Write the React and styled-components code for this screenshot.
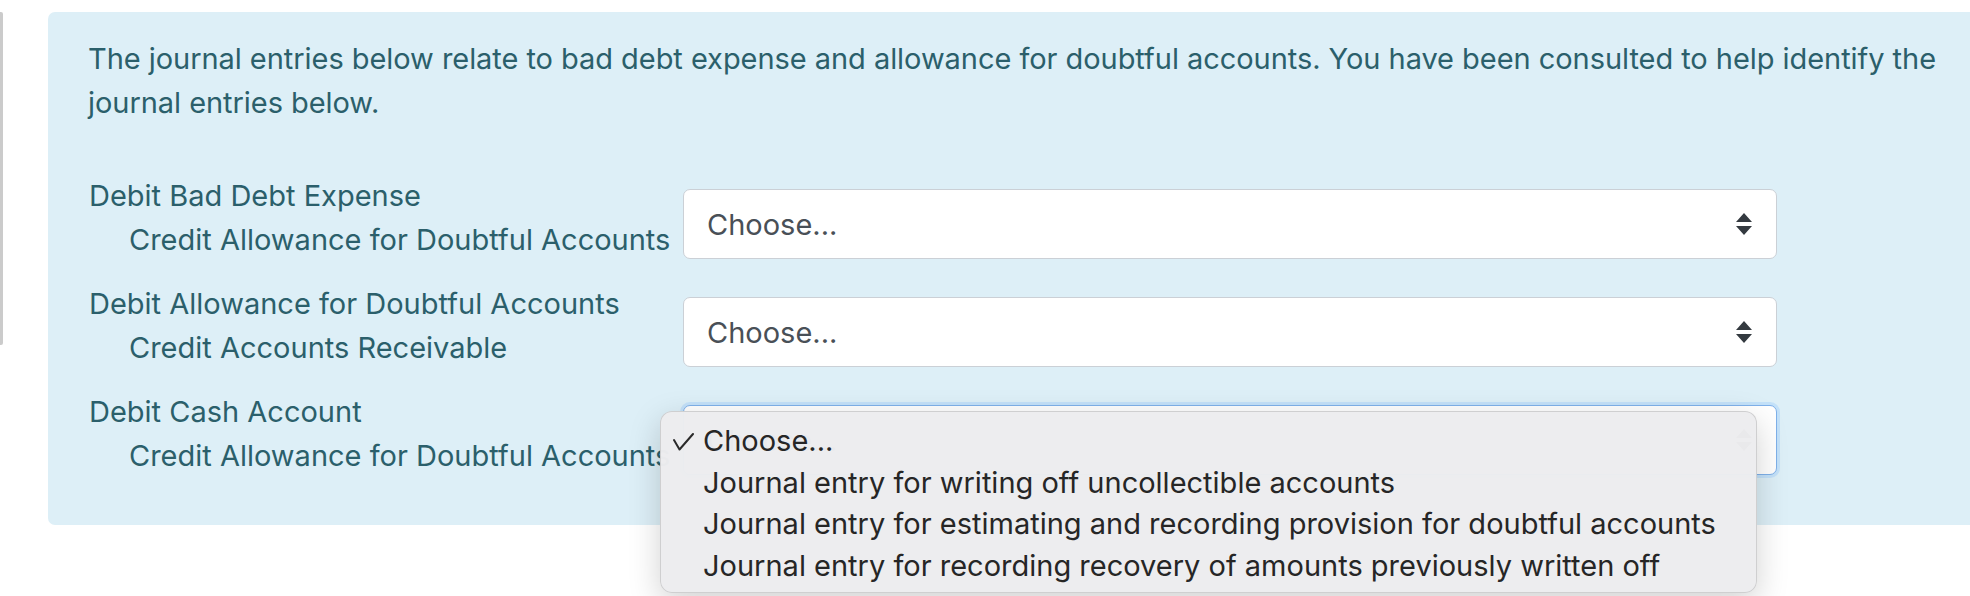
import React from 'react';
import styled, { createGlobalStyle, css } from 'styled-components';

const entries = [
    { debit: 'Debit Bad Debt Expense', credit: 'Credit Allowance for Doubtful Accounts' },
    { debit: 'Debit Allowance for Doubtful Accounts', credit: 'Credit Accounts Receivable' },
    { debit: 'Debit Cash Account', credit: 'Credit Allowance for Doubtful Accounts', open: true },
];

const options = [
    'Choose...',
    'Journal entry for writing off uncollectible accounts',
    'Journal entry for estimating and recording provision for doubtful accounts',
    'Journal entry for recording recovery of amounts previously written off',
];

const GlobalStyle = createGlobalStyle`
    *, *::before, *::after { box-sizing: border-box; }
    html, body {
        margin: 0;
        padding: 0;
        background: #fff;
        overflow: hidden;
    }
    body {
        font-family: Inter, "Noto Sans", "Liberation Sans", sans-serif;
    }
`;

const Arrows = () => (
    <svg width="16" height="22" viewBox="0 0 16 22">
        <path d="M0 9 L8 0 L16 9 Z M0 13 L16 13 L8 22 Z" fill="#343a40" />
    </svg>
);

const Check = () => (
    <svg width="21" height="18" viewBox="0 0 21 18">
        <polyline points="1,7 6.5,16.5 20,1" fill="none" stroke="#2a2a2a" strokeWidth="2" strokeLinecap="round" strokeLinejoin="round" />
    </svg>
);

class App extends React.Component {

    renderMenu() {
        return (
            <Menu>
                {options.map((opt, i) => (
                    <MenuItem key={opt}>
                        <CheckSlot>{i === 0 && <Check />}</CheckSlot>
                        <span>{opt}</span>
                    </MenuItem>
                ))}
            </Menu>
        );
    }

    render() {
        return (
            <Page>
                <GlobalStyle />
                <Rail />
                <Alert>
                    <Intro>
                        The journal entries below relate to bad debt expense and allowance for doubtful accounts. You have been consulted to help identify the journal entries below.
                    </Intro>
                    <Form>
                        {entries.map(entry => (
                            <Row key={entry.debit + entry.credit}>
                                <Label>
                                    <Line>{entry.debit}</Line>
                                    <Line indent>{entry.credit}</Line>
                                </Label>
                                <SelectWrap>
                                    <Select focused={entry.open}>
                                        <span>Choose...</span>
                                        <Arrows />
                                    </Select>
                                    {entry.open && this.renderMenu()}
                                </SelectWrap>
                            </Row>
                        ))}
                    </Form>
                </Alert>
            </Page>
        );
    }
}

export default App;

const Page = styled.div`
    display: flex;
    align-items: flex-start;
    width: 1970px;
    height: 596px;
    overflow: hidden;
`;

const Rail = styled.div`
    flex: none;
    width: 3px;
    height: 333px;
    margin-top: 12px;
    background: #cbcbcb;
    border-radius: 0 2px 2px 0;
`;

const Alert = styled.div`
    flex: none;
    width: 1962px;
    margin: 12px 0 0 45px;
    padding: 25px 40px 47px;
    background: #ddeff7;
    color: #2b5f6b;
    border-radius: 7px;
    font-size: 29px;
    line-height: 44px;
`;

const Intro = styled.p`
    margin: 0 0 49px;
    letter-spacing: -0.05px;
`;

const Form = styled.div`
    display: grid;
    row-gap: 20px;
`;

const Row = styled.div`
    display: grid;
    grid-template-columns: 595px 1094px;
    align-items: start;
`;

const Label = styled.div`
    display: flex;
    flex-direction: column;
    padding-left: 1px;
`;

const Line = styled.div`
    white-space: nowrap;
    ${props => props.indent && css`
        padding-left: 40px;
    `}
`;

const SelectWrap = styled.div`
    position: relative;
    margin-top: 15px;
`;

const Select = styled.div`
    height: 70px;
    display: flex;
    align-items: center;
    justify-content: space-between;
    padding: 0 24px 0 23px;
    background: #fff;
    border: 1px solid #cbd0d6;
    border-radius: 7px;
    color: #495057;
    font-size: 29px;
    line-height: normal;
    ${props => props.focused && css`
        border-color: #7fb1ea;
        box-shadow: 0 0 0 3px rgba(128, 189, 255, 0.28);
    `}
`;

const Menu = styled.div`
    position: absolute;
    left: -23px;
    top: 6px;
    width: 1097px;
    padding: 8px 0 6px;
    background: rgba(237, 237, 239, 0.98);
    border: 1px solid rgba(0, 0, 0, 0.13);
    border-radius: 12px;
    box-shadow: 0 10px 32px rgba(0, 0, 0, 0.18);
    color: #262626;
    font-size: 29px;
    line-height: 41.5px;
    z-index: 10;
`;

const MenuItem = styled.div`
    display: flex;
    align-items: center;
    padding-left: 12px;
    white-space: nowrap;
`;

const CheckSlot = styled.div`
    flex: none;
    width: 30px;
    display: flex;
    align-items: center;
    padding-top: 2px;
`;
